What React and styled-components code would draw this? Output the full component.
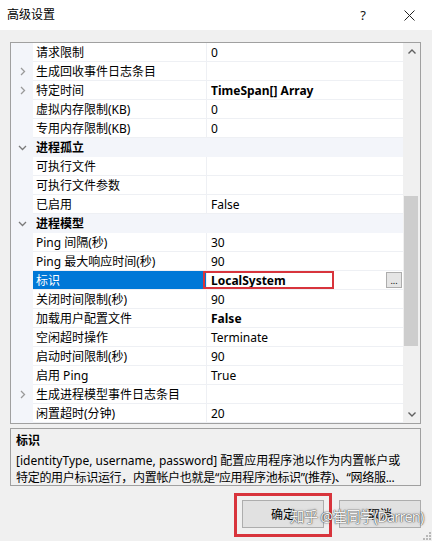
import React from 'react';
import styled, { createGlobalStyle } from 'styled-components';

const Global = createGlobalStyle`
  html, body { margin: 0; padding: 0; background: #f0f0f0; }
  body { font-family: "Noto Sans", "Noto Sans CJK SC", sans-serif; font-size: 12px; color: #000; }
`;

const FONT = `"Noto Sans", "Noto Sans CJK SC", sans-serif`;

const Window = styled.div`
  position: relative;
  width: 432px;
  height: 541px;
  display: flex;
  flex-direction: column;
  background: #f0f0f0;
  overflow: hidden;
  font-family: ${FONT};
`;

const TitleBar = styled.div`
  height: 30px;
  flex: 0 0 30px;
  background: #fff;
  display: flex;
  align-items: center;
  padding-left: 7px;
`;

const Title = styled.div`
  flex: 1;
  font-size: 12px;
  line-height: 30px;
`;

const TitleButton = styled.div`
  width: 46px;
  height: 30px;
  display: flex;
  align-items: center;
  justify-content: center;
  font-size: 13px;
  color: #111;
  box-sizing: border-box;
`;

const Body = styled.div`
  flex: 1;
  display: flex;
  flex-direction: column;
  padding: 12px 11px 0 10px;
`;

const Grid = styled.div`
  height: 382px;
  box-sizing: border-box;
  border: 1px solid #a0a0a0;
  display: flex;
  background: #fff;
`;

const List = styled.div`
  flex: 1;
  display: flex;
  flex-direction: column;
`;

const Row = styled.div`
  height: 19px;
  display: grid;
  grid-template-columns: 22px 173px 1px 196px;
  background: ${p => (p.$category ? '#f3f5fa' : '#fff')};
`;

const Gutter = styled.div`
  background: #f3f5fa;
  display: flex;
  align-items: center;
  justify-content: center;
  padding-left: 1px;
`;

const NameCell = styled.div`
  box-sizing: border-box;
  height: 19px;
  border-bottom: 1px solid ${p => (p.$category ? '#f3f5fa' : '#eef0f4')};
  background: ${p => (p.$selected ? '#0078d7' : 'transparent')};
  color: ${p => (p.$selected ? '#fff' : '#000')};
  font-weight: ${p => (p.$category ? 700 : 400)};
  padding: 2px 0 0 3px;
  line-height: 16px;
  white-space: nowrap;
  grid-column: ${p => (p.$category ? '2 / span 3' : 'auto')};
`;

const Divider = styled.div`
  background: #eef0f4;
`;

const ValueCell = styled.div`
  position: relative;
  box-sizing: border-box;
  height: 19px;
  border-bottom: 1px solid #eef0f4;
  padding-left: 4px;
  font-weight: ${p => (p.$bold ? 700 : 400)};
  white-space: nowrap;
  display: flex;
  align-items: flex-start;
`;

const ValueText = styled.span`
  flex: 1;
  padding-top: 2px;
  line-height: 16px;
`;

const DotsButton = styled.div`
  width: 14px;
  height: 14px;
  margin: 1px 1px 0 0;
  border: 1px solid #adadad;
  background: #e5e5e5;
  font-size: 9px;
  font-weight: 400;
  line-height: 16px;
  text-align: center;
  color: #000;
`;

const Annotation = styled.div`
  position: absolute;
  left: ${p => p.$l}px;
  top: ${p => p.$t}px;
  width: ${p => p.$w}px;
  height: ${p => p.$h}px;
  border: ${p => p.$b}px solid #d8343c;
  box-sizing: border-box;
  pointer-events: none;
`;

const Scrollbar = styled.div`
  width: 17px;
  background: #f0f0f0;
  display: flex;
  flex-direction: column;
`;

const ScrollArrow = styled.div`
  height: 17px;
  flex: 0 0 17px;
  display: flex;
  align-items: center;
  justify-content: center;
`;

const Track = styled.div`
  flex: 1;
  display: flex;
  flex-direction: column;
`;

const Thumb = styled.div`
  margin: ${p => p.$offset}px 2px 0 1px;
  height: ${p => p.$size}px;
  background: #cdcdcd;
`;

const Desc = styled.div`
  margin-top: 4px;
  height: 58px;
  box-sizing: border-box;
  border: 1px solid #a0a0a0;
  padding: 2px 5px 0 5px;
  display: flex;
  flex-direction: column;
`;

const DescTitle = styled.div`
  font-weight: 700;
  line-height: 20px;
`;

const DescLine = styled.div`
  line-height: 20px;
  white-space: nowrap;
  overflow: hidden;
  letter-spacing: ${p => p.$ls || 0}px;
`;

const Buttons = styled.div`
  margin-top: 14px;
  display: flex;
  justify-content: flex-end;
  gap: 15px;
`;

const ButtonWrap = styled.div`
  position: relative;
`;

const Button = styled.div`
  width: 82px;
  height: 28px;
  box-sizing: border-box;
  border: 1px solid #adadad;
  background: #e1e1e1;
  display: flex;
  align-items: center;
  justify-content: center;
  font-size: 12px;
`;

const Watermark = styled.div`
  position: absolute;
  left: 290px;
  top: 505px;
  font-size: 14.5px;
  color: rgba(255, 255, 255, 0.95);
  text-shadow: 0 0 1px rgba(60, 60, 60, 0.9), 0 0 1px rgba(60, 60, 60, 0.9), 0 0 3px rgba(80, 80, 80, 0.4);
  white-space: nowrap;
  letter-spacing: -0.8px;
`;

const Grip = styled.svg`
  position: absolute;
  right: 1px;
  bottom: 1px;
`;

const Chevron = ({ dir }) =>
  dir === 'down' ? (
    <svg width="9" height="6" viewBox="0 0 9 6">
      <polyline points="1,1 4.5,4.5 8,1" fill="none" stroke="#7a7a7a" strokeWidth="1.3" />
    </svg>
  ) : (
    <svg width="6" height="9" viewBox="0 0 6 9">
      <polyline points="1,1 4.5,4.5 1,8" fill="none" stroke="#9a9a9a" strokeWidth="1.3" />
    </svg>
  );

const rows = [
  { name: '请求限制', value: '0' },
  { name: '生成回收事件日志条目', value: '', chevron: true },
  { name: '特定时间', value: 'TimeSpan[] Array', bold: true, chevron: true },
  { name: '虚拟内存限制(KB)', value: '0' },
  { name: '专用内存限制(KB)', value: '0' },
  { category: '进程孤立' },
  { name: '可执行文件', value: '' },
  { name: '可执行文件参数', value: '' },
  { name: '已启用', value: 'False' },
  { category: '进程模型' },
  { name: 'Ping 间隔(秒)', value: '30' },
  { name: 'Ping 最大响应时间(秒)', value: '90' },
  { name: '标识', value: 'LocalSystem', bold: true, selected: true, dots: true, annotated: true },
  { name: '关闭时间限制(秒)', value: '90' },
  { name: '加载用户配置文件', value: 'False', bold: true },
  { name: '空闲超时操作', value: 'Terminate' },
  { name: '启动时间限制(秒)', value: '90' },
  { name: '启用 Ping', value: 'True' },
  { name: '生成进程模型事件日志条目', value: '', chevron: true },
  { name: '闲置超时(分钟)', value: '20' },
];

export default function App() {
  return (
    <>
      <Global />
      <Window>
        <TitleBar>
          <Title>高级设置</Title>
          <TitleButton>?</TitleButton>
          <TitleButton>
            <svg width="11" height="11" viewBox="0 0 11 11">
              <path d="M0.5 0.5 L10.5 10.5 M10.5 0.5 L0.5 10.5" stroke="#222" strokeWidth="1" />
            </svg>
          </TitleButton>
        </TitleBar>
        <Body>
          <Grid>
            <List>
              {rows.map((r, i) =>
                r.category ? (
                  <Row key={i} $category>
                    <Gutter>
                      <Chevron dir="down" />
                    </Gutter>
                    <NameCell $category>{r.category}</NameCell>
                  </Row>
                ) : (
                  <Row key={i}>
                    <Gutter>{r.chevron && <Chevron dir="right" />}</Gutter>
                    <NameCell $selected={r.selected}>{r.name}</NameCell>
                    <Divider />
                    <ValueCell $bold={r.bold}>
                      <ValueText>{r.value}</ValueText>
                      {r.dots && <DotsButton>...</DotsButton>}
                      {r.annotated && <Annotation $l={-4} $t={0} $w={131} $h={18} $b={2} />}
                    </ValueCell>
                  </Row>
                )
              )}
            </List>
            <Scrollbar>
              <ScrollArrow>
                <svg width="8" height="5" viewBox="0 0 8 5">
                  <polyline points="0.5,4.5 4,1 7.5,4.5" fill="none" stroke="#606060" strokeWidth="1.4" />
                </svg>
              </ScrollArrow>
              <Track>
                <Thumb $offset={136} $size={150} />
              </Track>
              <ScrollArrow>
                <svg width="8" height="5" viewBox="0 0 8 5">
                  <polyline points="0.5,0.5 4,4 7.5,0.5" fill="none" stroke="#606060" strokeWidth="1.4" />
                </svg>
              </ScrollArrow>
            </Scrollbar>
          </Grid>
          <Desc>
            <DescTitle>标识</DescTitle>
            <DescLine>[identityType, username, password] 配置应用程序池以作为内置帐户或</DescLine>
            <DescLine $ls={-0.3}>特定的用户标识运行，内置帐户也就是“应用程序池标识”(推荐)、“网络服...</DescLine>
          </Desc>
          <Buttons>
            <ButtonWrap>
              <Button>确定</Button>
              <Annotation $l={-8} $t={-7} $w={98} $h={44} $b={3} />
            </ButtonWrap>
            <ButtonWrap>
              <Button>取消</Button>
            </ButtonWrap>
          </Buttons>
        </Body>
        <Watermark>知乎 @崔同学(Darren)</Watermark>
        <Grip width="8" height="8" viewBox="0 0 8 8">
          <rect x="6" y="0" width="2" height="2" fill="#b8b8b8" />
          <rect x="3" y="3" width="2" height="2" fill="#b8b8b8" />
          <rect x="6" y="3" width="2" height="2" fill="#b8b8b8" />
          <rect x="0" y="6" width="2" height="2" fill="#b8b8b8" />
          <rect x="3" y="6" width="2" height="2" fill="#b8b8b8" />
          <rect x="6" y="6" width="2" height="2" fill="#b8b8b8" />
        </Grip>
      </Window>
    </>
  );
}
